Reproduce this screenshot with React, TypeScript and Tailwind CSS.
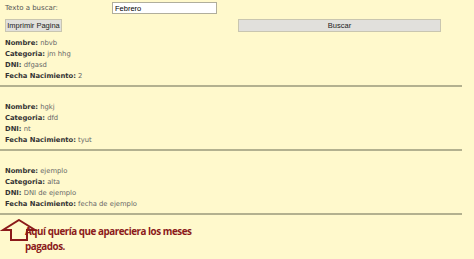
const records = [
  { nombre: "nbvb", categoria: "jm hhg", dni: "dfgasd", fecha: "2" },
  { nombre: "hgkj", categoria: "dfd", dni: "nt", fecha: "tyut" },
  { nombre: "ejemplo", categoria: "alta", dni: "DNI de ejemplo", fecha: "fecha de ejemplo" },
];

function Field({ label, value }: { label: string; value: string }) {
  return (
    <div className="h-[11px] leading-[11px] whitespace-nowrap">
      <span className="font-bold text-[#333]">{label}:</span>{" "}
      <span className="text-[#666]">{value}</span>
    </div>
  );
}

export default function App() {
  return (
    <div
      className="w-[474px] h-[259px] overflow-hidden bg-[#fff9cc] pt-[2px] text-[6.8px]"
      style={{ fontFamily: '"DejaVu Sans", sans-serif' }}
    >
      {/* search row */}
      <div className="flex items-center h-[12px] pl-[5px]">
        <span className="w-[107px] text-[7px] text-[#555]">Texto a buscar:</span>
        <input
          defaultValue="Febrero"
          className="w-[105px] h-[12px] bg-white border border-[#b0ae9c] px-[2px] text-[7.5px] text-black outline-none"
          style={{ fontFamily: '"Liberation Sans", sans-serif' }}
        />
      </div>

      {/* buttons */}
      <div
        className="flex items-center h-[13px] mt-[5px] pl-[5px] text-[7.5px] text-[#222]"
        style={{ fontFamily: '"Liberation Sans", sans-serif' }}
      >
        <button className="w-[57px] h-[13px] bg-[#e1e0dc] border border-[#c9c6b0] leading-none">
          Imprimir Pagina
        </button>
        <button className="ml-[176px] w-[203px] h-[13px] bg-[#e1e0dc] border border-[#c9c6b0] leading-none">
          Buscar
        </button>
      </div>

      {/* records */}
      <div className="mt-[6px] w-[462px]">
        {records.map((r, i) => (
          <div key={i} className={i === 0 ? "" : "pt-[15px]"}>
            <div className="pl-[5px]">
              <Field label="Nombre" value={r.nombre} />
              <Field label="Categoria" value={r.categoria} />
              <Field label="DNI" value={r.dni} />
              <Field label="Fecha Nacimiento" value={r.fecha} />
            </div>
            <div className="mt-[3px] h-[2px] bg-[#b3b18f]" />
          </div>
        ))}
      </div>

      {/* annotation */}
      <div className="relative">
        <svg
          className="absolute left-0 top-[-5px]"
          width="40"
          height="24"
          viewBox="0 0 40 24"
        >
          <polygon
            points="19,1 35,11 27,11 27,21 11,21 11,11 3,11"
            fill="none"
            stroke="#8b1a1a"
            strokeWidth="2"
            strokeLinejoin="miter"
          />
        </svg>
        <p
          className="relative ml-[25px] mt-[9px] w-[175px] text-[9.8px] tracking-[-0.45px] leading-[15px] font-bold text-[#8b1a1a]"
          style={{ fontFamily: '"Open Sans", sans-serif' }}
        >
          Aquí quería que apareciera los meses pagados.
        </p>
      </div>
    </div>
  );
}
